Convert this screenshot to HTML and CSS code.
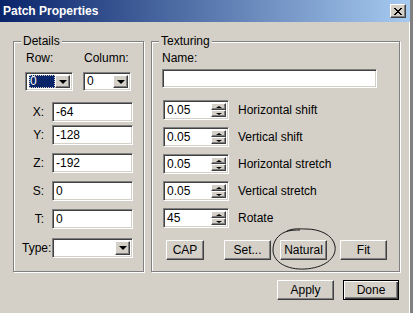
FILE: index.html
```html
<!DOCTYPE html>
<html lang="en">
<head>
    <meta charset="UTF-8">
    <title>Patch Properties</title>
    <link rel="stylesheet" href="styles.css">
</head>
<body>
    <div class="window">
        <div class="titlebar">
            <span class="title">Patch Properties</span>
            <span class="close">
                <svg width="8" height="7" viewBox="0 0 8 7"><path d="M0 0L7 7M1 0L8 7M7 0L0 7M8 0L1 7" stroke="#000" stroke-width="1"/></svg>
            </span>
        </div>

        <div class="groups">
            <!-- Details -->
            <fieldset class="group details">
                <legend>Details</legend>
                <div class="details-body">
                    <div class="rc">
                        <div class="rc-col">
                            <label>Row:</label>
                            <div class="combo combo-small">
                                <span class="combo-text"><span class="selected">0</span></span>
                                <span class="combo-btn"><span class="arrow"></span></span>
                            </div>
                        </div>
                        <div class="rc-col">
                            <label>Column:</label>
                            <div class="combo combo-small">
                                <span class="combo-text">0</span>
                                <span class="combo-btn"><span class="arrow"></span></span>
                            </div>
                        </div>
                    </div>

                    <div class="coord coord-x"><label>X:</label><div class="edit coord-edit">-64</div></div>
                    <div class="coord coord-y"><label>Y:</label><div class="edit coord-edit">-128</div></div>
                    <div class="coord"><label>Z:</label><div class="edit coord-edit">-192</div></div>
                    <div class="coord"><label>S:</label><div class="edit coord-edit">0</div></div>
                    <div class="coord"><label>T:</label><div class="edit coord-edit">0</div></div>

                    <div class="type-row">
                        <label>Type:</label>
                        <div class="combo combo-type">
                            <span class="combo-text"></span>
                            <span class="combo-btn"><span class="arrow"></span></span>
                        </div>
                    </div>
                </div>
            </fieldset>

            <!-- Texturing -->
            <fieldset class="group texturing">
                <legend>Texturing</legend>
                <div class="tex-body">
                    <label>Name:</label>
                    <div class="edit name-edit"></div>

                    <div class="spins">
                        <div class="spin-row">
                            <div class="spin"><span class="spin-text">0.05</span><span class="spin-btns"><span class="sbtn"><span class="up"></span></span><span class="sbtn"><span class="down"></span></span></span></div>
                            <span class="spin-label">Horizontal shift</span>
                        </div>
                        <div class="spin-row">
                            <div class="spin"><span class="spin-text">0.05</span><span class="spin-btns"><span class="sbtn"><span class="up"></span></span><span class="sbtn"><span class="down"></span></span></span></div>
                            <span class="spin-label">Vertical shift</span>
                        </div>
                        <div class="spin-row">
                            <div class="spin"><span class="spin-text">0.05</span><span class="spin-btns"><span class="sbtn"><span class="up"></span></span><span class="sbtn"><span class="down"></span></span></span></div>
                            <span class="spin-label">Horizontal stretch</span>
                        </div>
                        <div class="spin-row">
                            <div class="spin"><span class="spin-text">0.05</span><span class="spin-btns"><span class="sbtn"><span class="up"></span></span><span class="sbtn"><span class="down"></span></span></span></div>
                            <span class="spin-label">Vertical stretch</span>
                        </div>
                        <div class="spin-row">
                            <div class="spin"><span class="spin-text">45</span><span class="spin-btns"><span class="sbtn"><span class="up"></span></span><span class="sbtn"><span class="down"></span></span></span></div>
                            <span class="spin-label">Rotate</span>
                        </div>
                    </div>

                    <div class="tex-buttons">
                        <button class="btn btn-cap">CAP</button>
                        <button class="btn btn-set">Set...</button>
                        <button class="btn btn-natural">Natural</button>
                        <button class="btn btn-fit">Fit</button>
                    </div>
                </div>
            </fieldset>
        </div>

        <div class="footer">
            <button class="btn btn-apply">Apply</button>
            <button class="btn btn-done">Done</button>
        </div>

        <!-- hand drawn ring around the Natural button -->
        <svg class="ring" width="413" height="313" viewBox="0 0 413 313">
            <path d="M287 231 C293 228 300 229 306 229 C320 229 333 235 335 246 C337 259 323 268 305 269 C287 270 273 262 273 250 C273 241 278 235 285 232 C290 230 296 230 300 230" fill="none" stroke="#1a1a1a" stroke-width="1"/>
        </svg>
    </div>
</body>
</html>
```

FILE: styles.css
```css
* {
    box-sizing: border-box;
}

body {
    margin: 0;
    font-family: "Liberation Sans", Arial, sans-serif;
    font-size: 12px;
    color: #000;
}

.window {
    position: relative;
    width: 413px;
    height: 313px;
    background: #d4d0c8;
    box-shadow: inset -3px 0 #808080, inset -4px 0 #ffffff;
}

/* Title bar */
.titlebar {
    height: 22px;
    margin-right: 3px;
    padding: 0 4px 0 3px;
    display: flex;
    align-items: center;
    justify-content: space-between;
    background: linear-gradient(to right, #0a246a, #a6caf0);
}

.title {
    color: #fff;
    font-weight: bold;
    font-size: 12px;
}

.close {
    width: 16px;
    height: 14px;
    display: flex;
    align-items: center;
    justify-content: center;
    background: #d4d0c8;
    border: 1px solid;
    border-color: #fff #404040 #404040 #fff;
    box-shadow: inset -1px -1px #808080;
}

/* Group boxes */
.groups {
    display: flex;
    gap: 7px;
    margin-top: 12px;
    padding-left: 13px;
}

.group {
    margin: 0;
    padding: 0;
    height: 238px;
    min-width: 0;
    border: 1px solid #808080;
    box-shadow: inset 1px 1px #fff, 1px 1px #fff;
}

.group legend {
    margin-left: 7px;
    padding: 0 2px;
    line-height: 14px;
    background: #d4d0c8;
}

.details {
    width: 131px;
}

.texturing {
    width: 249px;
}

label {
    display: block;
    line-height: 14px;
}

/* Sunken edit */
.edit {
    height: 20px;
    padding-left: 3px;
    line-height: 18px;
    background: #fff;
    border: 1px solid;
    border-color: #808080 #fff #fff #808080;
    box-shadow: inset 1px 1px #404040, inset -1px -1px #d4d0c8;
}

/* Combo boxes */
.combo {
    display: flex;
    height: 19px;
    padding: 2px;
    background: #fff;
    border: 1px solid;
    border-color: #808080 #fff #fff #808080;
    box-shadow: inset 1px 1px #404040, inset -1px -1px #d4d0c8;
}

.combo-text {
    flex: 1;
    display: flex;
    align-items: center;
    padding-left: 1px;
    line-height: 13px;
}

.combo-text .selected {
    display: flex;
    align-items: center;
    width: 100%;
    height: 100%;
    padding-left: 1px;
    background: #0a246a;
    color: #fff;
    outline: 1px dotted #d4d0c8;
    outline-offset: -1px;
}

.combo-btn {
    width: 15px;
    display: flex;
    align-items: center;
    justify-content: center;
    background: #d4d0c8;
    border: 1px solid;
    border-color: #fff #404040 #404040 #fff;
    box-shadow: inset -1px -1px #808080;
}

.arrow {
    width: 0;
    height: 0;
    border-left: 4px solid transparent;
    border-right: 4px solid transparent;
    border-top: 4px solid #000;
}

/* Details content */
.details-body {
    padding: 3px 0 0 11px;
}

.rc {
    display: flex;
    gap: 10px;
}

.rc-col {
    display: flex;
    flex-direction: column;
    gap: 7px;
}

.rc-col label {
    margin-left: 1px;
}

.combo-small {
    width: 48px;
}

.coord {
    display: flex;
    align-items: center;
    margin-top: 8px;
}

.coord label {
    width: 19px;
    margin-right: 8px;
    text-align: right;
}

.coord-x {
    margin-top: 11px;
}

.coord-y {
    margin-top: 3px;
}

.coord-edit {
    width: 81px;
}

.type-row {
    display: flex;
    align-items: center;
    margin: 9px 0 0 -3px;
}

.type-row label {
    width: 30px;
}

.combo-type {
    width: 81px;
    height: 20px;
}

/* Texturing content */
.tex-body {
    padding: 3px 0 0 10px;
}

.name-edit {
    width: 215px;
    height: 19px;
    margin-top: 4px;
}

.spins {
    display: flex;
    flex-direction: column;
    gap: 7px;
    margin-top: 12px;
}

.spin-row {
    display: flex;
    align-items: center;
    gap: 9px;
    margin-left: 1px;
}

.spin {
    display: flex;
    width: 66px;
    height: 20px;
    padding: 2px;
    background: #fff;
    border: 1px solid;
    border-color: #808080 #fff #fff #808080;
    box-shadow: inset 1px 1px #404040, inset -1px -1px #d4d0c8;
}

.spin-text {
    flex: 1;
    padding-left: 1px;
    line-height: 14px;
}

.spin-btns {
    width: 15px;
    display: flex;
    flex-direction: column;
}

.sbtn {
    flex: 1;
    display: flex;
    align-items: center;
    justify-content: center;
    background: #d4d0c8;
    border: 1px solid;
    border-color: #fff #404040 #404040 #fff;
    box-shadow: inset -1px -1px #808080;
}

.up,
.down {
    width: 0;
    height: 0;
    border-left: 3px solid transparent;
    border-right: 3px solid transparent;
}

.up {
    border-bottom: 2px solid #000;
}

.down {
    border-top: 2px solid #000;
}

/* Push buttons */
.btn {
    height: 20px;
    padding: 0;
    font-family: inherit;
    font-size: 12px;
    color: #000;
    background: #d4d0c8;
    border: 1px solid;
    border-color: #fff #404040 #404040 #fff;
    box-shadow: inset -1px -1px #808080;
}

.tex-buttons {
    display: flex;
    margin-top: 12px;
}

.btn-cap {
    width: 38px;
    margin-left: 4px;
}

.btn-set {
    width: 47px;
    margin-left: 20px;
}

.btn-natural {
    width: 47px;
    margin-left: 9px;
}

.btn-fit {
    width: 47px;
    margin-left: 13px;
}

.footer {
    display: flex;
    justify-content: flex-end;
    gap: 9px;
    margin-top: 8px;
    padding-right: 14px;
}

.btn-apply {
    width: 57px;
}

.btn-done {
    width: 56px;
    border: 1px solid #000;
    box-shadow: inset 1px 1px #fff, inset -1px -1px #404040, inset -2px -2px #808080;
}

/* Hand drawn ring overlay */
.ring {
    position: absolute;
    left: 0;
    top: 0;
    pointer-events: none;
}
```
